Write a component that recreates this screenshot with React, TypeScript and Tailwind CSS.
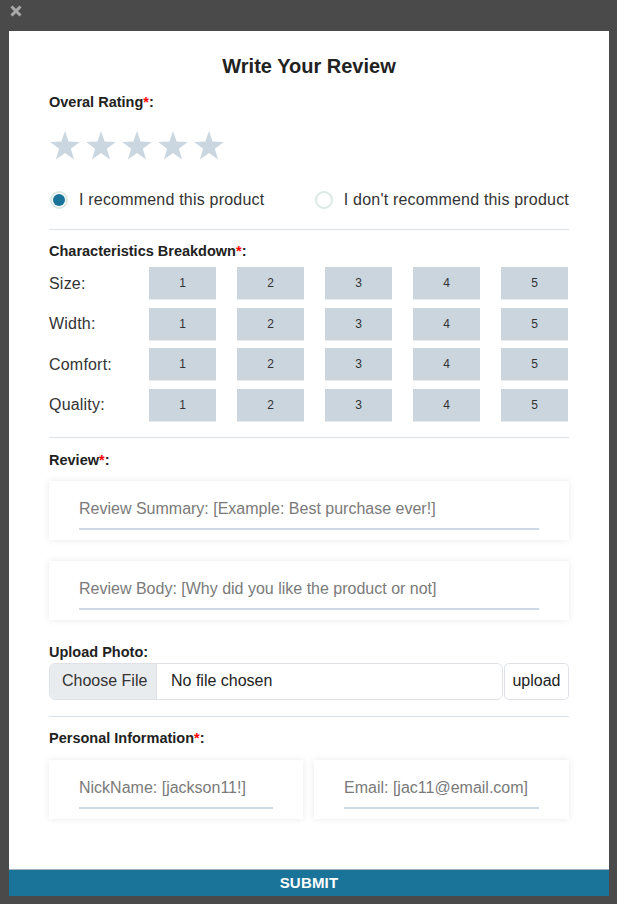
import React from "react";

const font = { fontFamily: '"Liberation Sans", Arial, sans-serif' };

function Star() {
  return (
    <svg width="30" height="29" viewBox="0 0 30 29">
      <polygon
        points="15,0 18.6,10.6 29.8,10.9 20.9,17.7 24.1,28.5 15,22.1 5.9,28.5 9.1,17.7 0.2,10.9 11.4,10.6"
        fill="#cad6e0"
      />
    </svg>
  );
}

function Label({ text, required }: { text: string; required?: boolean }) {
  return (
    <div className="h-[16px] text-[14.5px] leading-[16px] font-bold text-[#222]">
      {text}
      {required && <span className="text-[#ff0000]">*</span>}:
    </div>
  );
}

function Radio({ checked, label }: { checked?: boolean; label: string }) {
  return (
    <label className="flex items-center gap-[11px] text-[16px] leading-[24px] text-[#333] tracking-[0.2px]">
      <span className="w-[18px] h-[18px] rounded-full border-2 border-[#dbe8e5] bg-white flex items-center justify-center">
        {checked && <span className="w-[12px] h-[12px] rounded-full bg-[#1a7499]" />}
      </span>
      {label}
    </label>
  );
}

function TextCard({ placeholder, className = "" }: { placeholder: string; className?: string }) {
  return (
    <div
      className={`bg-white h-[59px] pt-[14px] px-[30px] shadow-[0_0_7px_rgba(0,0,0,0.09)] ${className}`}
    >
      <input
        className="block w-full h-[35px] pb-[5px] border-b-2 border-[#cdd9e3] outline-none text-[16px] leading-[28px] text-[#333] placeholder:text-[#7a7a7a] bg-transparent"
        style={font}
        placeholder={placeholder}
      />
    </div>
  );
}

const characteristics = ["Size", "Width", "Comfort", "Quality"];

export default function App() {
  return (
    <div className="w-[617px] h-[904px] bg-[#4a4a4a] relative overflow-hidden" style={font}>
      <svg className="absolute left-[10px] top-[5px]" width="12" height="12" viewBox="0 0 12 12">
        <path d="M1.5 1.5 L10.5 10.5 M10.5 1.5 L1.5 10.5" stroke="#a9a9a9" strokeWidth="3" />
      </svg>

      <div className="ml-[9px] mt-[31px] w-[600px] h-[865px] bg-white flex flex-col">
        <div className="flex-1 px-[40px]">
          <h1 className="pt-[23px] h-[47px] text-center text-[20px] leading-[24px] font-bold text-[#222]">
            Write Your Review
          </h1>

          <div className="mt-[16px]">
            <Label text="Overal Rating" required />
          </div>

          <div className="mt-[21px] flex gap-[6px] pl-[1px]">
            {[0, 1, 2, 3, 4].map((i) => (
              <Star key={i} />
            ))}
          </div>

          <div className="mt-[28px] flex justify-between pl-[1px]">
            <Radio checked label="I recommend this product" />
            <Radio label="I don't recommend this product" />
          </div>

          <div className="mt-[17px] border-t border-[#dde3e8]" />

          <div className="mt-[13px]">
            <Label text="Characteristics Breakdown" required />
          </div>

          <div className="mt-[8px] flex flex-col gap-[7.5px]">
            {characteristics.map((c) => (
              <div key={c} className="flex items-center">
                <div className="w-[100px] text-[16px] text-[#333] tracking-[0.2px]">{c}:</div>
                <div className="flex gap-[21px]">
                  {[1, 2, 3, 4, 5].map((n) => (
                    <button
                      key={n}
                      className="w-[67px] h-[33px] bg-[#cad5de] border-b border-[#e6ecf0] text-[12px] text-[#333] flex items-center justify-center"
                    >
                      {n}
                    </button>
                  ))}
                </div>
              </div>
            ))}
          </div>

          <div className="mt-[15px] border-t border-[#dde3e8]" />

          <div className="mt-[14px]">
            <Label text="Review" required />
          </div>

          <TextCard className="mt-[13px]" placeholder="Review Summary: [Example: Best purchase ever!]" />
          <TextCard className="mt-[21px]" placeholder="Review Body: [Why did you like the product or not]" />

          <div className="mt-[24px]">
            <Label text="Upload Photo" />
          </div>

          <div className="mt-[3px] flex gap-[1px]">
            <div className="w-[454px] h-[37px] flex items-center border border-[#dee2e6] rounded-[6px] overflow-hidden text-[16px] text-[#222]">
              <div className="h-full w-[107px] bg-[#e9ecef] border-r border-[#dee2e6] flex items-center pl-[12px] text-[#333]">
                Choose File
              </div>
              <div className="pl-[14px]">No file chosen</div>
            </div>
            <button className="w-[65px] h-[37px] border border-[#dee2e6] rounded-[5px] text-[16px] text-[#222] bg-white">
              upload
            </button>
          </div>

          <div className="mt-[16px] border-t border-[#d6e4ea]" />

          <div className="mt-[13px]">
            <Label text="Personal Information" required />
          </div>

          <div className="mt-[14px] flex gap-[11px]">
            <TextCard className="w-[254px]" placeholder="NickName: [jackson11!]" />
            <TextCard className="w-[255px]" placeholder="Email: [jac11@email.com]" />
          </div>
        </div>

        <button className="h-[27px] w-full bg-[#1a7499] border-t border-[#9fb2bd] text-white text-[15px] font-bold tracking-[0.2px]">
          SUBMIT
        </button>
      </div>
    </div>
  );
}
